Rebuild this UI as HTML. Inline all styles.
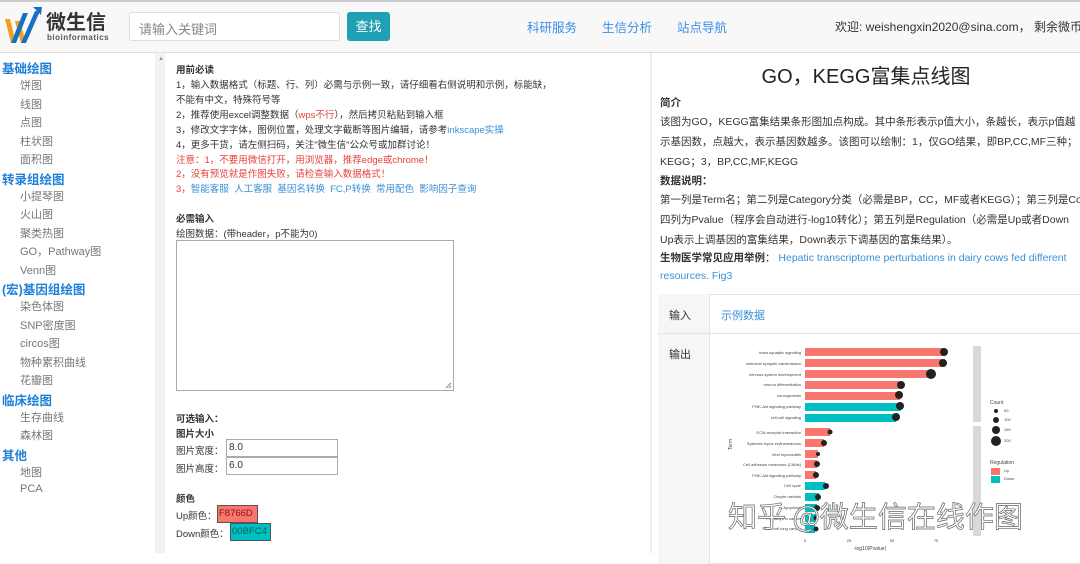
<!DOCTYPE html>
<html><head><meta charset="utf-8"><style>
*{margin:0;padding:0;box-sizing:border-box}
body{width:1080px;height:553px;overflow:hidden;position:relative;background:#fff;font-family:"Liberation Sans","Noto Sans CJK SC",sans-serif;color:#333}
.a{position:absolute;white-space:nowrap}
.hd{position:absolute;left:0;top:0;width:1080px;height:53px;background:#f8f8f8;border-bottom:1px solid #ddd;border-top:2px solid #ccc}
.side h{display:block;position:absolute;left:2px;font-size:12.5px;font-weight:bold;color:#1e7fd8}
.side i{font-style:normal;position:absolute;left:20px;font-size:11px;color:#777}
.m{font-size:9.5px;color:#333;left:176px}
.r{font-size:10.5px;color:#333;left:660px}
.blue{color:#3a8fd6}.red{color:#e8413c}
</style></head><body>
<div class="hd"></div>
<svg class="a" style="left:3px;top:5px" width="40" height="40" viewBox="0 0 40 40"><path d="M2 14 L8 38 L13 38 L7 14Z" fill="#f0a020"/><path d="M12 16 L18 38 L23 38 L17 16Z" fill="#f0a020"/><path d="M8 38 L20 8 L25 8 L13 38Z" fill="#1a6fc0"/><path d="M18 38 L32 6 L37 6 L23 38Z" fill="#1a6fc0"/><path d="M30 2 L39 2 L38 10Z" fill="#1a6fc0"/></svg>
<div class="a" style="left:46px;top:6px;font-size:20px;font-weight:bold;color:#333">微生信</div>
<div class="a" style="left:47px;top:33px;font-size:8px;font-weight:bold;color:#555;letter-spacing:.5px">bioinformatics</div>
<div class="a" style="left:129px;top:12px;width:211px;height:29px;background:#fff;border:1px solid #ddd;border-radius:3px;font-size:13px;color:#888;padding:6px 9px">请输入关键词</div>
<div class="a" style="left:347px;top:12px;width:43px;height:29px;background:#1fa0b4;border-radius:3px;font-size:13px;color:#fff;text-align:center;line-height:29px">查找</div>
<div class="a" style="left:527px;top:17px;font-size:12.5px;color:#3a8ee6">科研服务</div>
<div class="a" style="left:602px;top:17px;font-size:12.5px;color:#3a8ee6">生信分析</div>
<div class="a" style="left:677px;top:17px;font-size:12.5px;color:#3a8ee6">站点导航</div>
<div class="a" style="left:835px;top:18px;font-size:12px;color:#333">欢迎: weishengxin2020@sina.com， 剩余微币:</div>

<div class="a" style="left:155px;top:53px;width:10px;height:500px;background:#f2f2f2"></div>
<div class="a" style="left:158px;top:56px;font-size:6px;color:#999">▲</div>
<div class="a" style="left:650px;top:53px;width:2px;height:500px;background:#ececec"></div>

<div class="side">
<h style="top:58px">基础绘图</h><i style="top:77px">饼图</i><i style="top:96px">线图</i><i style="top:114px">点图</i><i style="top:133px">柱状图</i><i style="top:151px">面积图</i>
<h style="top:169px">转录组绘图</h><i style="top:188px">小提琴图</i><i style="top:206px">火山图</i><i style="top:225px">聚类热图</i><i style="top:243px">GO，Pathway图</i><i style="top:262px">Venn图</i>
<h style="top:279px">(宏)基因组绘图</h><i style="top:298px">染色体图</i><i style="top:317px">SNP密度图</i><i style="top:335px">circos图</i><i style="top:354px">物种累积曲线</i><i style="top:372px">花瓣图</i>
<h style="top:390px">临床绘图</h><i style="top:409px">生存曲线</i><i style="top:427px">森林图</i>
<h style="top:445px">其他</h><i style="top:464px">地图</i><i style="top:483px">PCA</i>
</div>

<div class="a m" style="top:62px;font-weight:bold">用前必读</div>
<div class="a m" style="top:77px">1，输入数据格式（标题、行、列）必需与示例一致，请仔细看右侧说明和示例，标能缺，</div>
<div class="a m" style="top:92px">不能有中文，特殊符号等</div>
<div class="a m" style="top:107px">2，推荐使用excel调整数据（<span class="red">wps不行</span>），然后拷贝粘贴到输入框</div>
<div class="a m" style="top:122px">3，修改文字字体，图例位置，处理文字截断等图片编辑，请参考<span class="blue">inkscape实操</span></div>
<div class="a m" style="top:137px">4，更多干货，请左侧扫码，关注"微生信"公众号或加群讨论！</div>
<div class="a m red" style="top:152px">注意：1，不要用微信打开，用浏览器，推荐edge或chrome！</div>
<div class="a m red" style="top:166px">2，没有预览就是作图失败，请检查输入数据格式！</div>
<div class="a m" style="top:181px"><span class="red">3，</span><span class="blue">智能客服&nbsp; 人工客服&nbsp; 基因名转换&nbsp; FC,P转换&nbsp; 常用配色&nbsp; 影响因子查询</span></div>
<div class="a m" style="top:211px;font-weight:bold">必需输入</div>
<div class="a m" style="top:226px">绘图数据：(带header，p不能为0)</div>
<div class="a" style="left:176px;top:240px;width:278px;height:151px;border:1px solid #aaa"></div>
<svg class="a" style="left:445px;top:382px" width="7" height="7"><path d="M1 6 L6 1 M4 6 L6 4" stroke="#888" stroke-width="1"/></svg>
<div class="a m" style="top:411px;font-weight:bold">可选输入：</div>
<div class="a m" style="top:426px;font-weight:bold">图片大小</div>
<div class="a m" style="top:443px">图片宽度：</div>
<div class="a" style="left:226px;top:439px;width:112px;height:18px;border:1px solid #aaa;font-size:10px;padding:2px 2px">8.0</div>
<div class="a m" style="top:461px">图片高度：</div>
<div class="a" style="left:226px;top:457px;width:112px;height:18px;border:1px solid #aaa;font-size:10px;padding:2px 2px">6.0</div>
<div class="a m" style="top:491px;font-weight:bold">颜色</div>
<div class="a m" style="top:508px">Up颜色：</div>
<div class="a" style="left:217px;top:505px;width:41px;height:18px;background:#f8766d;border:1px solid #555;font-size:9.5px;color:#8a1010;padding:2px 1px">F8766D</div>
<div class="a m" style="top:526px">Down颜色：</div>
<div class="a" style="left:230px;top:523px;width:41px;height:18px;background:#00bfc4;border:1px solid #555;font-size:9.5px;color:#065;padding:2px 1px">00BFC4</div>

<div class="a" style="left:652px;top:60px;width:428px;text-align:center;font-size:20px;color:#222">GO，KEGG富集点线图</div>
<div class="a r" style="top:95px;font-weight:bold">简介</div>
<div class="a r" style="top:114px">该图为GO，KEGG富集结果条形图加点构成。其中条形表示p值大小，条越长，表示p值越</div>
<div class="a r" style="top:134px">示基因数，点越大，表示基因数越多。该图可以绘制：1，仅GO结果，即BP,CC,MF三种；</div>
<div class="a r" style="top:154px">KEGG；3，BP,CC,MF,KEGG</div>
<div class="a r" style="top:173px;font-weight:bold">数据说明：</div>
<div class="a r" style="top:192px">第一列是Term名；第二列是Category分类（必需是BP，CC，MF或者KEGG）；第三列是Co</div>
<div class="a r" style="top:212px">四列为Pvalue（程序会自动进行-log10转化）；第五列是Regulation（必需是Up或者Down</div>
<div class="a r" style="top:232px">Up表示上调基因的富集结果，Down表示下调基因的富集结果）。</div>
<div class="a r" style="top:250px"><b>生物医学常见应用举例</b>：<span class="blue"> Hepatic transcriptome perturbations in dairy cows fed different</span></div>
<div class="a r blue" style="top:270px">resources. Fig3</div>
<div class="a" style="left:658px;top:294px;width:430px;height:270px;border:1px solid #e4e4e4"></div>
<div class="a" style="left:658px;top:294px;width:52px;height:270px;background:#f6f6f6;border-right:1px solid #e4e4e4"></div>
<div class="a" style="left:658px;top:333px;width:430px;height:1px;background:#e4e4e4"></div>
<div class="a" style="left:669px;top:307px;font-size:11px">输入</div>
<div class="a" style="left:721px;top:307px;font-size:11px;color:#3a8fd6">示例数据</div>
<div class="a" style="left:669px;top:346px;font-size:11px">输出</div>

<svg class="a" style="left:700px;top:330px" width="380" height="223" viewBox="0 0 380 223" font-family="Liberation Sans">
<g font-size="4" fill="#444" text-anchor="end">
<text x="101" y="24">trans-synaptic signaling</text><text x="101" y="35">chemical synaptic transmission</text><text x="101" y="46">nervous system development</text><text x="101" y="56">neuron differentiation</text><text x="101" y="67">neurogenesis</text><text x="101" y="78">PI3K-Akt signaling pathway</text><text x="101" y="89">cell-cell signaling</text>
<text x="101" y="104">ECM-receptor interaction</text><text x="101" y="115">Systemic lupus erythematosus</text><text x="101" y="126">Viral myocarditis</text><text x="101" y="136">Cell adhesion molecules (CAMs)</text><text x="101" y="147">PI3K-Akt signaling pathway</text><text x="101" y="157">Cell cycle</text><text x="101" y="168">Oocyte meiosis</text><text x="101" y="179">Apoptosis</text><text x="101" y="190">Pathways in cancer</text><text x="101" y="200">Small cell lung cancer</text>
</g>
<g fill="#f8766d"><rect x="105" y="18" width="138" height="8"/><rect x="105" y="29" width="137" height="8"/><rect x="105" y="40" width="125" height="8"/><rect x="105" y="51" width="96" height="8"/><rect x="105" y="62" width="95" height="8"/><rect x="105" y="98" width="25" height="8"/><rect x="105" y="109" width="19" height="8"/><rect x="105" y="120" width="13" height="8"/><rect x="105" y="130" width="12" height="8"/><rect x="105" y="141" width="11" height="8"/></g>
<g fill="#00bfc4"><rect x="105" y="73" width="96" height="8"/><rect x="105" y="84" width="91" height="8"/><rect x="105" y="152" width="20" height="8"/><rect x="105" y="163" width="14" height="8"/><rect x="105" y="174" width="12" height="8"/><rect x="105" y="184" width="12" height="8"/><rect x="105" y="195" width="10" height="8"/></g>
<g fill="#222"><circle cx="244" cy="22" r="4"/><circle cx="243" cy="33" r="4"/><circle cx="231" cy="44" r="5"/><circle cx="201" cy="55" r="4"/><circle cx="199" cy="65" r="4"/><circle cx="200" cy="76" r="4"/><circle cx="196" cy="87" r="4"/><circle cx="130" cy="102" r="2.5"/><circle cx="124" cy="113" r="3"/><circle cx="118" cy="124" r="2"/><circle cx="117" cy="134" r="3"/><circle cx="116" cy="145" r="3"/><circle cx="126" cy="156" r="3"/><circle cx="118" cy="167" r="3"/><circle cx="117" cy="178" r="3"/><circle cx="116" cy="188" r="2.5"/><circle cx="116" cy="199" r="2.5"/></g>
<rect x="273" y="16" width="8" height="76" fill="#d9d9d9"/><rect x="273" y="96" width="8" height="110" fill="#d9d9d9"/>
<g font-size="4" fill="#444"><text x="105" y="212" text-anchor="middle">0</text><text x="149" y="212" text-anchor="middle">25</text><text x="192" y="212" text-anchor="middle">50</text><text x="236" y="212" text-anchor="middle">75</text><text x="170" y="220" font-size="5" text-anchor="middle">-log10(Pvalue)</text><text x="32" y="120" font-size="5" transform="rotate(-90 32 120)">Term</text>
<text x="290" y="74" font-size="5">Count</text><text x="304" y="82">50</text><text x="304" y="91">100</text><text x="304" y="101">150</text><text x="304" y="112">200</text><text x="290" y="134" font-size="5">Regulation</text><text x="304" y="142">Up</text><text x="304" y="150">Down</text></g>
<g fill="#222"><circle cx="296" cy="81" r="2"/><circle cx="296" cy="90" r="3"/><circle cx="296" cy="100" r="4"/><circle cx="296" cy="111" r="5"/></g>
<rect x="291" y="138" width="9" height="7" fill="#f8766d"/><rect x="291" y="146" width="9" height="7" fill="#00bfc4"/>
<text x="28" y="197" font-size="29" fill="#fff" stroke="#666" stroke-width=".7" font-family="Noto Sans CJK SC">知乎 @微生信在线作图</text>
</svg>
</body></html>
